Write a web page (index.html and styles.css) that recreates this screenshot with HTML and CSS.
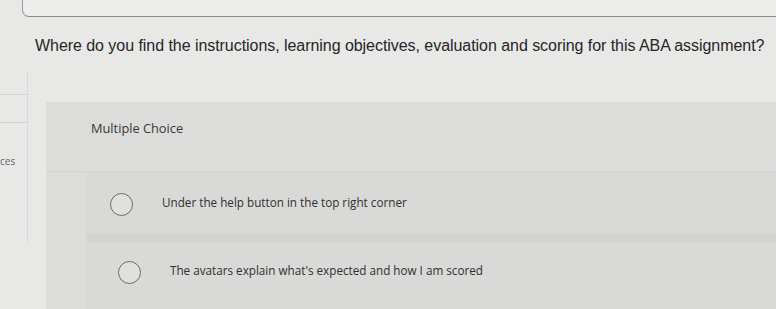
FILE: index.html
```html
<!DOCTYPE html>
<html lang="en">
<head>
    <meta charset="UTF-8">
    <meta name="viewport" content="width=device-width, initial-scale=1.0">
    <title>Question</title>
    <link rel="stylesheet" href="styles.css">
</head>
<body>
    <div class="topbar"></div>
    <h1 class="question">Where do you find the instructions, learning objectives, evaluation and scoring for this ABA assignment?</h1>
    <div class="layout">
        <div class="sidebar">
            <div class="side-cell first"></div>
            <div class="side-cell"></div>
            <div class="side-cell side-label">ces</div>
        </div>
        <div class="card">
            <div class="card-type">Multiple Choice</div>
            <div class="choices">
                <label class="choice">
                    <span class="radio"></span>
                    <span class="choice-text">Under the help button in the top right corner</span>
                </label>
                <div class="divider"></div>
                <label class="choice choice-b">
                    <span class="radio"></span>
                    <span class="choice-text">The avatars explain what's expected and how I am scored</span>
                </label>
            </div>
        </div>
    </div>
</body>
</html>
```

FILE: styles.css
```css
body {
    margin: 0;
    background-color: #e8e8e7;
    font-family: "Liberation Sans", Arial, sans-serif;
    color: #333;
    overflow: hidden;
}

.topbar {
    margin-left: 22px;
    height: 16px;
    background-color: #ededec;
    border-left: 1px solid #9a9a9a;
    border-bottom: 1px solid #8c8c8c;
    border-bottom-left-radius: 7px;
}

.question {
    margin: 19px 0 0 35px;
    font-size: 16px;
    font-weight: normal;
    line-height: 20px;
    letter-spacing: -0.05px;
    color: #262626;
    white-space: nowrap;
}

.layout {
    display: flex;
    margin-top: 16px;
}

.sidebar {
    width: 27px;
    border-right: 1px solid #d9d9d9;
    height: 170px;
}

.side-cell {
    height: 27px;
    border-bottom: 1px solid #d2d2d2;
}

.side-cell.first {
    height: 22px;
}

.side-label {
    border-bottom: none;
    padding-top: 31px;
    font-family: "Open Sans", sans-serif;
    font-size: 10px;
    color: #666;
}

.card {
    flex: 1;
    margin: 30px 0 0 18px;
    padding-top: 17px;
    background-color: #dcdcdb;
}

.card-type {
    padding-left: 45px;
    font-family: "Open Sans", sans-serif;
    font-size: 12.8px;
    color: #383838;
    line-height: 18px;
    height: 52px;
    border-bottom: 1px solid #d4d4d4;
}

.choices {
    margin-left: 40px;
    background-color: #d9d9d8;
    padding-top: 3px;
    padding-bottom: 10px;
}

.choice {
    display: flex;
    align-items: center;
    gap: 29px;
    height: 58px;
    padding-left: 24px;
}

.choice-b {
    padding-left: 32px;
}

.radio {
    width: 21px;
    height: 21px;
    border: 1.5px solid #6a6a6a;
    border-radius: 50%;
    background-color: #e0e0df;
}

.choice-text {
    font-family: "Open Sans", sans-serif;
    font-size: 11.7px;
    color: #303030;
    margin-top: -4px;
}

.divider {
    height: 10px;
    background-color: #d4d4d3;
}
```
